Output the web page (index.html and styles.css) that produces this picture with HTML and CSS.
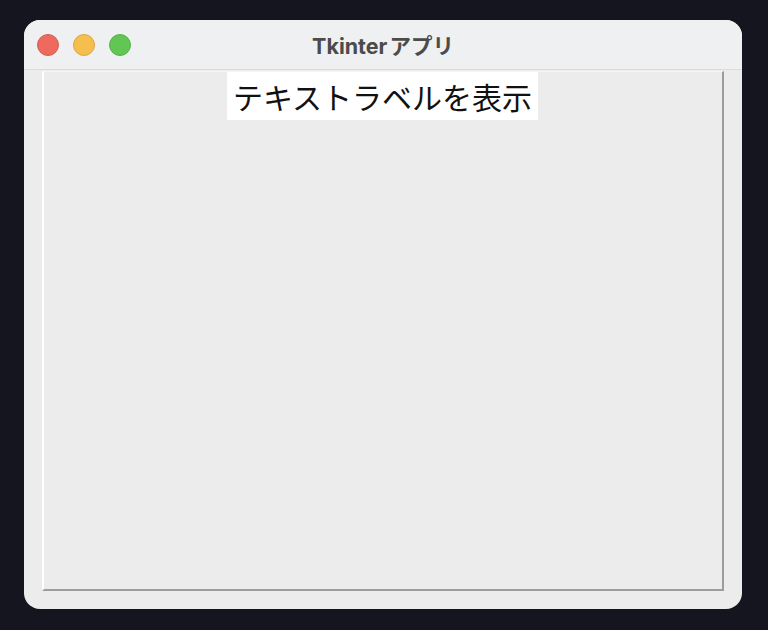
FILE: index.html
```html
<!DOCTYPE html>
<html lang="ja">
<head>
<meta charset="utf-8">
<link rel="stylesheet" href="styles.css">
</head>
<body>
<div class="window">
  <div class="titlebar">
    <div class="lights">
      <span class="light red"></span>
      <span class="light yellow"></span>
      <span class="light green"></span>
    </div>
    <div class="title">Tkinter アプリ</div>
  </div>
  <div class="content">
    <div class="frame">
      <div class="label">テキストラベルを表示</div>
    </div>
  </div>
</div>
</body>
</html>
```
FILE: styles.css
```css
html, body {
  margin: 0;
  padding: 0;
  background: #15151f;
  width: 768px;
  height: 630px;
  overflow: hidden;
}
body {
  padding-top: 20px;
  padding-left: 24px;
  box-sizing: border-box;
}
.window {
  width: 718px;
  height: 589px;
  border-radius: 16px;
  overflow: hidden;
  background: #ececec;
  display: flex;
  flex-direction: column;
}
.titlebar {
  height: 50px;
  background: #eef0f1;
  border-bottom: 1px solid #dcdcdc;
  box-sizing: border-box;
  display: flex;
  align-items: center;
  position: relative;
}
.lights {
  display: flex;
  gap: 14px;
  padding-left: 13px;
}
.light {
  width: 22px;
  height: 22px;
  border-radius: 50%;
  box-sizing: border-box;
}
.red { background: #ee6a5e; border: 1px solid #d85a50; }
.yellow { background: #f5bf4f; border: 1px solid #dea640; }
.green { background: #62c655; border: 1px solid #55b049; }
.title {
  position: absolute;
  left: 0;
  right: 0;
  top: 0;
  bottom: 0;
  display: flex;
  align-items: center;
  justify-content: center;
  font-family: "Inter", "Noto Sans CJK JP", sans-serif;
  font-weight: 700;
  font-size: 21.5px;
  color: #4b4b4b;
  padding-left: 0;
  padding-top: 0;
  word-spacing: -3px;
  pointer-events: none;
}
.content {
  flex: 1;
  padding: 1px 18px 18px 18px;
  display: flex;
}
.frame {
  flex: 1;
  box-sizing: border-box;
  border-left: 2px solid #ffffff;
  border-top: 1px solid #f6f6f6;
  border-right: 2px solid #9c9c9c;
  border-bottom: 2px solid #9c9c9c;
  display: flex;
  flex-direction: column;
  align-items: center;
}
.label {
  background: #ffffff;
  width: 311px;
  height: 48px;
  display: flex;
  align-items: center;
  justify-content: center;
  font-family: "Noto Sans CJK JP", sans-serif;
  font-size: 30px;
  color: #111111;
  line-height: 1;
  margin-left: -1px;
}
```
